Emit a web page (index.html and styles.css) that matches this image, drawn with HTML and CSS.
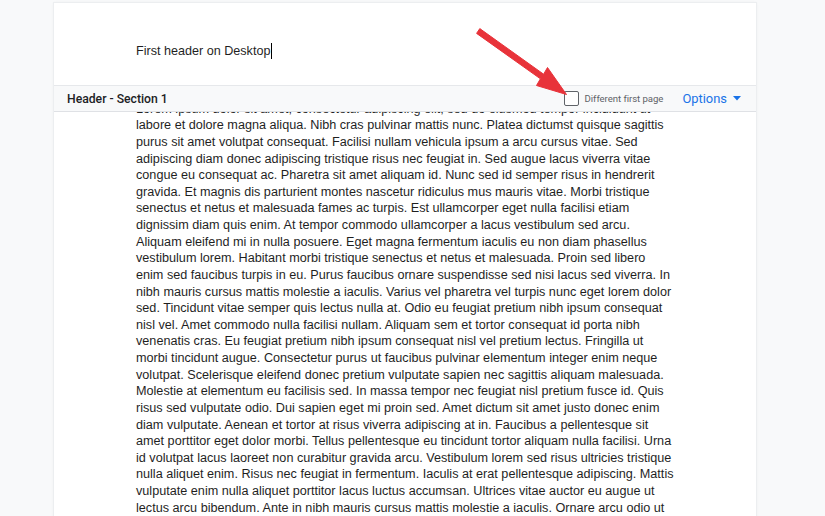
FILE: index.html
```html
<!DOCTYPE html>
<html>
<head>
<meta charset="utf-8">
<link rel="stylesheet" href="styles.css">
</head>
<body>
<div class="screen">
  <div class="page">
    <div class="header-area">
      <p class="header-text">First header on Desktop<span class="cursor"></span></p>
    </div>
    <div class="doc-body">
      <div class="line">Lorem ipsum dolor sit amet, consectetur adipiscing elit, sed do eiusmod tempor incididunt ut</div>
      <div class="line">labore et dolore magna aliqua. Nibh cras pulvinar mattis nunc. Platea dictumst quisque sagittis</div>
      <div class="line">purus sit amet volutpat consequat. Facilisi nullam vehicula ipsum a arcu cursus vitae. Sed</div>
      <div class="line">adipiscing diam donec adipiscing tristique risus nec feugiat in. Sed augue lacus viverra vitae</div>
      <div class="line">congue eu consequat ac. Pharetra sit amet aliquam id. Nunc sed id semper risus in hendrerit</div>
      <div class="line">gravida. Et magnis dis parturient montes nascetur ridiculus mus mauris vitae. Morbi tristique</div>
      <div class="line">senectus et netus et malesuada fames ac turpis. Est ullamcorper eget nulla facilisi etiam</div>
      <div class="line">dignissim diam quis enim. At tempor commodo ullamcorper a lacus vestibulum sed arcu.</div>
      <div class="line">Aliquam eleifend mi in nulla posuere. Eget magna fermentum iaculis eu non diam phasellus</div>
      <div class="line">vestibulum lorem. Habitant morbi tristique senectus et netus et malesuada. Proin sed libero</div>
      <div class="line">enim sed faucibus turpis in eu. Purus faucibus ornare suspendisse sed nisi lacus sed viverra. In</div>
      <div class="line">nibh mauris cursus mattis molestie a iaculis. Varius vel pharetra vel turpis nunc eget lorem dolor</div>
      <div class="line">sed. Tincidunt vitae semper quis lectus nulla at. Odio eu feugiat pretium nibh ipsum consequat</div>
      <div class="line">nisl vel. Amet commodo nulla facilisi nullam. Aliquam sem et tortor consequat id porta nibh</div>
      <div class="line">venenatis cras. Eu feugiat pretium nibh ipsum consequat nisl vel pretium lectus. Fringilla ut</div>
      <div class="line">morbi tincidunt augue. Consectetur purus ut faucibus pulvinar elementum integer enim neque</div>
      <div class="line">volutpat. Scelerisque eleifend donec pretium vulputate sapien nec sagittis aliquam malesuada.</div>
      <div class="line">Molestie at elementum eu facilisis sed. In massa tempor nec feugiat nisl pretium fusce id. Quis</div>
      <div class="line">risus sed vulputate odio. Dui sapien eget mi proin sed. Amet dictum sit amet justo donec enim</div>
      <div class="line">diam vulputate. Aenean et tortor at risus viverra adipiscing at in. Faucibus a pellentesque sit</div>
      <div class="line">amet porttitor eget dolor morbi. Tellus pellentesque eu tincidunt tortor aliquam nulla facilisi. Urna</div>
      <div class="line">id volutpat lacus laoreet non curabitur gravida arcu. Vestibulum lorem sed risus ultricies tristique</div>
      <div class="line">nulla aliquet enim. Risus nec feugiat in fermentum. Iaculis at erat pellentesque adipiscing. Mattis</div>
      <div class="line">vulputate enim nulla aliquet porttitor lacus luctus accumsan. Ultrices vitae auctor eu augue ut</div>
      <div class="line">lectus arcu bibendum. Ante in nibh mauris cursus mattis molestie a iaculis. Ornare arcu odio ut</div>
    </div>
    <div class="header-bar">
      <span class="bar-label">Header - Section 1</span>
      <label class="first-page">
        <span class="checkbox"></span>
        <span class="first-page-text">Different first page</span>
      </label>
      <span class="options">Options
        <svg class="caret" width="8" height="5" viewBox="0 0 8 5"><path d="M0 0h8L4 4.5z" fill="currentColor"/></svg>
      </span>
    </div>
  </div>
  <svg class="arrow" width="825" height="516" viewBox="0 0 825 516">
    <polygon points="479.8,28.6 543.6,74.2 547.5,67.5 566.5,94.5 536.5,85.5 540.4,78.8 476.6,33.4" fill="#e8333a" stroke="#e8333a" stroke-width="1" stroke-linejoin="round"/>
  </svg>
</div>
</body>
</html>
```

FILE: styles.css
```css
* { box-sizing: border-box; }
html, body {
  margin: 0;
  padding: 0;
  width: 825px;
  height: 516px;
  overflow: hidden;
  background: #f8f9fa;
}
.screen {
  position: relative;
  width: 825px;
  height: 516px;
  overflow: hidden;
  padding-top: 3px;
}
.page {
  position: relative;
  margin-left: 54px;
  width: 702px;
  height: 600px;
  background: #ffffff;
  box-shadow: 0 0 0 1px #eceef0, 0 0 3px rgba(60, 64, 67, 0.08);
}
.header-area {
  height: 82px;
  padding-left: 82px;
  padding-top: 40px;
}
.header-text {
  margin: 0;
  font-family: "Liberation Sans", Arial, sans-serif;
  font-size: 12.6px;
  line-height: 17px;
  color: #1f1f1f;
}
.cursor {
  display: inline-block;
  width: 1px;
  height: 16px;
  background: #000;
  vertical-align: -4px;
  margin-left: 0.5px;
}
.doc-body {
  margin-top: 15.7px;
  padding-left: 82px;
  font-family: "Liberation Sans", Arial, sans-serif;
  font-size: 12.65px;
  line-height: 16.62px;
  color: #1f1f1f;
}
.line {
  white-space: nowrap;
}
.header-bar {
  position: absolute;
  top: 82px;
  left: 0;
  right: 0;
  height: 27px;
  background: #f8f9fa;
  border-top: 1px solid #e6e8eb;
  border-bottom: 1px solid #dfe1e5;
  display: flex;
  align-items: center;
  padding-left: 13px;
  padding-right: 15px;
  font-family: Roboto, "Liberation Sans", sans-serif;
}
.bar-label {
  font-size: 12.2px;
  font-weight: 500;
  color: #202124;
  flex: 1;
}
.first-page {
  display: flex;
  align-items: center;
  gap: 6px;
  margin-right: 19px;
}
.checkbox {
  width: 15px;
  height: 15px;
  border: 1.5px solid #5f6368;
  border-radius: 2px;
  background: #fff;
}
.first-page-text {
  font-size: 9.6px;
  letter-spacing: -0.05px;
  color: #5f6368;
}
.options {
  display: flex;
  align-items: center;
  gap: 6px;
  font-size: 12.9px;
  color: #1a73e8;
}
.caret {
  display: block;
}
.arrow {
  position: absolute;
  left: 0;
  top: 0;
  pointer-events: none;
}
```
